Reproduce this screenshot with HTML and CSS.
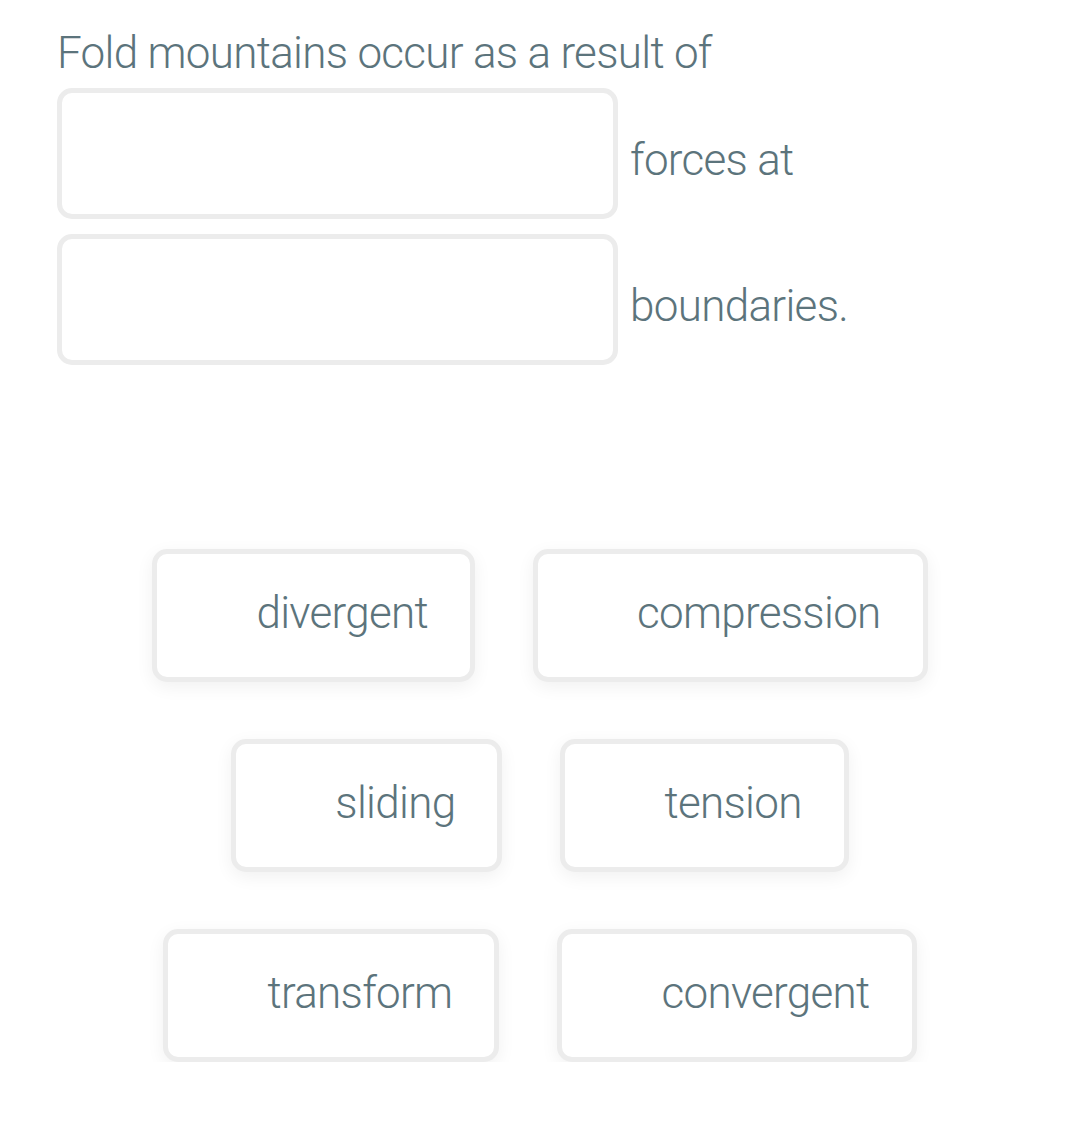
FILE: index.html
```html
<!DOCTYPE html>
<html lang="en">
<head>
<meta charset="utf-8">
<title>Fold mountains</title>
<link rel="stylesheet" href="styles.css">
</head>
<body>
<main class="page">
  <p class="prompt">Fold mountains occur as a result of</p>
  <div class="blank-row">
    <div class="blank"></div>
    <span class="label">forces at</span>
  </div>
  <div class="blank-row">
    <div class="blank"></div>
    <span class="label">boundaries.</span>
  </div>

  <div class="bank">
    <div class="bank-row">
      <div class="chip">divergent</div>
      <div class="chip">compression</div>
    </div>
    <div class="bank-row">
      <div class="chip">sliding</div>
      <div class="chip">tension</div>
    </div>
    <div class="bank-row">
      <div class="chip">transform</div>
      <div class="chip">convergent</div>
    </div>
  </div>
</main>
</body>
</html>
```

FILE: styles.css
```css
html, body {
  margin: 0;
  padding: 0;
  background: #ffffff;
}

body {
  font-family: Roboto, "Open Sans", "Noto Sans", sans-serif;
  font-weight: 300;
  color: #5c747c;
  font-size: 44px;
  letter-spacing: -0.7px;
}

.page {
  padding: 27px 0 0 57px;
  width: 1023px;
  box-sizing: border-box;
}

.prompt {
  margin: 0;
  line-height: 52px;
  height: 61px;
}

.blank-row {
  display: flex;
  align-items: center;
  gap: 12px;
}

.blank-row + .blank-row {
  margin-top: 15px;
}

.blank {
  width: 561px;
  height: 131px;
  box-sizing: border-box;
  border: 5px solid #ececec;
  border-radius: 15px;
  background: #ffffff;
}

.label {
  line-height: 52px;
  margin-top: 12px;
}

.bank {
  margin: 184px 0 0 -57px;
  width: 1080px;
  display: flex;
  flex-direction: column;
  gap: 57px;
}

.bank-row {
  display: flex;
  justify-content: center;
  gap: 58px;
}

.chip {
  box-sizing: border-box;
  height: 133px;
  padding: 33px 42px 38px 99px;
  line-height: 52px;
  border: 5px solid #ececec;
  border-radius: 15px;
  background: #ffffff;
  box-shadow: 0 5px 18px rgba(0, 0, 0, 0.06);
  white-space: nowrap;
}
```
